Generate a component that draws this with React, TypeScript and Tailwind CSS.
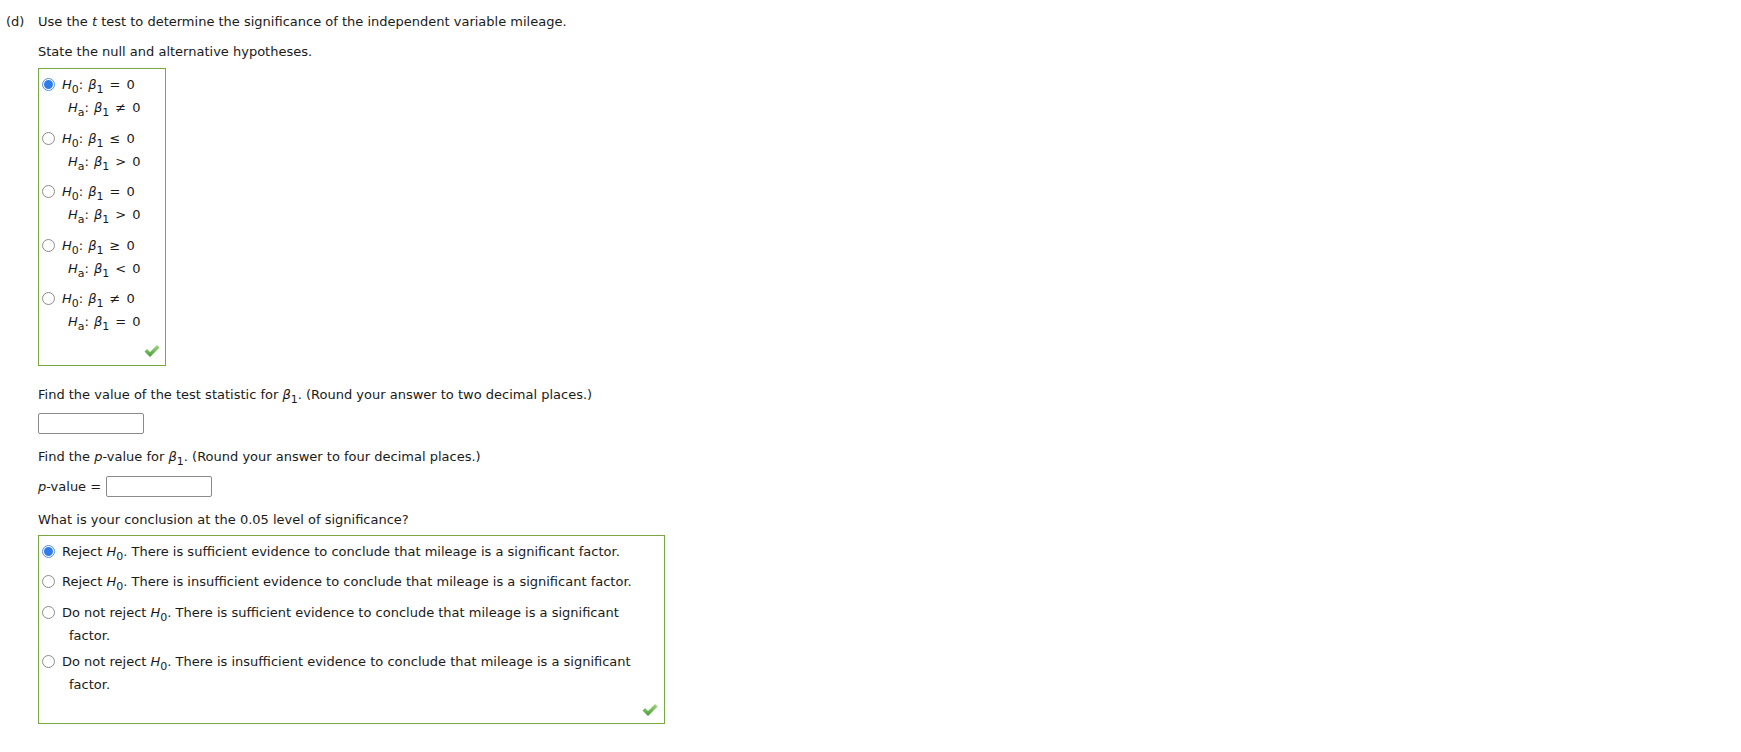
import React from "react";

function Radio({ on }: { on?: boolean }) {
  if (on) {
    return (
      <span className="w-[13px] h-[13px] rounded-full border border-[#4f8fe8] bg-white flex items-center justify-center shrink-0">
        <span className="w-[9px] h-[9px] rounded-full bg-[#2f7ce8]" />
      </span>
    );
  }
  return <span className="w-[13px] h-[13px] rounded-full border border-[#8c8c8c] bg-white shrink-0 block" />;
}

function Check({ id }: { id: string }) {
  return (
    <svg width="16" height="14" viewBox="0 0 16 14">
      <defs>
        <linearGradient id={id} x1="0" y1="0" x2="0" y2="1">
          <stop offset="0" stopColor="#a2da84" />
          <stop offset="1" stopColor="#479a33" />
        </linearGradient>
      </defs>
      <path d="M0.5 7.5 L3 5 L6 8 L13 1 L15.5 3.5 L6 13 Z" fill={`url(#${id})`} />
    </svg>
  );
}

function Sub({ children }: { children: React.ReactNode }) {
  return <span className="not-italic text-[11px] leading-[0] align-[-4px]">{children}</span>;
}

function Hyp({ h, rel }: { h: string; rel: string }) {
  return (
    <span className="whitespace-nowrap">
      <i>H</i>
      <Sub>{h}</Sub>
      <span>:</span>
      <i className="ml-[5px]">β</i>
      <Sub>1</Sub>
      <span className="ml-[6px]">{rel}</span>
      <span className="ml-[6px]">0</span>
    </span>
  );
}

const hyps: { h0: string; ha: string; on?: boolean }[] = [
  { h0: "=", ha: "≠", on: true },
  { h0: "≤", ha: ">" },
  { h0: "=", ha: ">" },
  { h0: "≥", ha: "<" },
  { h0: "≠", ha: "=" },
];

function H0() {
  return (
    <>
      <i>H</i>
      <Sub>0</Sub>
    </>
  );
}

const concl: { pre: string; post: string; wrap?: string; on?: boolean; mt: string }[] = [
  { pre: "Reject ", post: ". There is sufficient evidence to conclude that mileage is a significant factor.", on: true, mt: "mt-0" },
  { pre: "Reject ", post: ". There is insufficient evidence to conclude that mileage is a significant factor.", mt: "mt-[7px]" },
  { pre: "Do not reject ", post: ". There is sufficient evidence to conclude that mileage is a significant", wrap: "factor.", mt: "mt-[8px]" },
  { pre: "Do not reject ", post: ". There is insufficient evidence to conclude that mileage is a significant", wrap: "factor.", mt: "mt-[3px]" },
];

export default function App() {
  return (
    <div className="min-h-[752px] w-full bg-white text-[#1a1a1a] text-[13px] font-['DejaVu_Sans',sans-serif] pt-[12px]">
      <div className="flex leading-[19px]">
        <div className="w-[38px] pl-[6px] shrink-0">(d)</div>
        <div className="flex flex-col items-start">
          <div>
            Use the <i>t</i> test to determine the significance of the independent variable mileage.
          </div>
          <div className="mt-[11px]">State the null and alternative hypotheses.</div>

          <div className="mt-[7px] w-[128px] border border-[#78a843] pt-[4px] pl-[3px] flex flex-col">
            <div className="flex flex-col gap-[7.5px]">
              {hyps.map((o, i) => (
                <div key={i} className="flex flex-col">
                  <div className="flex items-center h-[23px]">
                    <Radio on={o.on} />
                    <span className="ml-[7px] leading-[23px]">
                      <Hyp h="0" rel={o.h0} />
                    </span>
                  </div>
                  <div className="h-[23px] leading-[23px] pl-[26px]">
                    <Hyp h="a" rel={o.ha} />
                  </div>
                </div>
              ))}
            </div>
            <div className="h-[32px] flex items-end justify-end pb-[7px] pr-[5px]">
              <Check id="c1" />
            </div>
          </div>

          <div className="mt-[19px]">
            Find the value of the test statistic for <i>β</i>
            <Sub>1</Sub>. (Round your answer to two decimal places.)
          </div>
          <div className="mt-[9px] w-[106px] h-[21px] border border-[#8a8a8a] rounded-[2px] bg-white" />

          <div className="mt-[13px]">
            Find the <i>p</i>-value for <i>β</i>
            <Sub>1</Sub>. (Round your answer to four decimal places.)
          </div>
          <div className="mt-[10px] flex items-center h-[21px]">
            <span>
              <i>p</i>-value =
            </span>
            <div className="ml-[5px] w-[106px] h-[21px] border border-[#8a8a8a] rounded-[2px] bg-white" />
          </div>

          <div className="mt-[13px]">What is your conclusion at the 0.05 level of significance?</div>

          <div className="mt-[6px] w-[627px] border border-[#78a843] pt-[4px] pl-[3px] flex flex-col">
            {concl.map((c, i) => (
              <div key={i} className={`flex flex-col ${c.mt}`}>
                <div className="flex items-center h-[23px]">
                  <Radio on={c.on} />
                  <span className="ml-[7px] leading-[23px] whitespace-nowrap">
                    {c.pre}
                    <H0 />
                    {c.post}
                  </span>
                </div>
                {c.wrap && <div className="h-[23px] leading-[23px] pl-[27px]">{c.wrap}</div>}
              </div>
            ))}
            <div className="h-[27px] flex items-end justify-end pb-[6px] pr-[6px]">
              <Check id="c2" />
            </div>
          </div>
        </div>
      </div>
    </div>
  );
}
